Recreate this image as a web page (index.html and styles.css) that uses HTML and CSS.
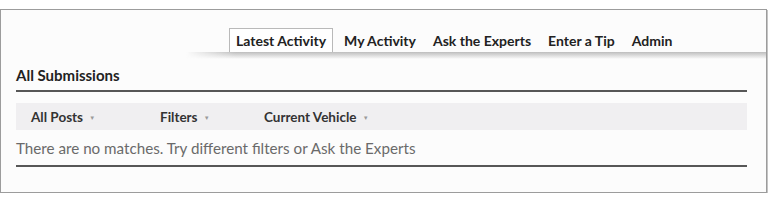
FILE: index.html
```html
<!DOCTYPE html>
<html lang="en">
<head>
    <meta charset="UTF-8">
    <title>All Submissions</title>
    <link rel="stylesheet" href="styles.css">
</head>
<body>
    <div class="frame">
        <ul class="tabs">
            <li class="active">Latest Activity</li>
            <li>My Activity</li>
            <li>Ask the Experts</li>
            <li>Enter a Tip</li>
            <li>Admin</li>
        </ul>
        <div class="tab-shadow"></div>

        <div class="content">
            <h2>All Submissions</h2>

            <div class="filter-bar">
                <span class="filter f-posts">All Posts <i class="caret">&#9660;</i></span>
                <span class="filter f-filters">Filters <i class="caret">&#9660;</i></span>
                <span class="filter">Current Vehicle <i class="caret">&#9660;</i></span>
            </div>

            <p class="empty">There are no matches. Try different filters or Ask the Experts</p>
        </div>
    </div>
</body>
</html>
```

FILE: styles.css
```css
body {
    margin: 0;
    background: #fff;
    font-family: Lato, "Open Sans", sans-serif;
    color: #333;
}
.frame {
    margin-top: 9px;
    width: 765px;
    height: 182px;
    border: 1px solid #9c9c9c;
    box-shadow: 1px 1px 0 #c4c4c4;
    background: #fcfcfc;
}
.tabs {
    display: flex;
    list-style: none;
    margin: 0;
    padding: 18px 0 0 228px;
    height: 24px;
}
.tabs li {
    padding: 0 6px;
    margin-right: 3px;
    border: 1px solid transparent;
    border-bottom: none;
    line-height: 23px;
    font-size: 14px;
    font-weight: bold;
    color: #222;
}
.tabs li.active {
    background: #fff;
    border-color: #b9b9b9;
    margin-right: 4px;
}
.tab-shadow {
    height: 7px;
    margin-left: 185px;
    background: linear-gradient(to bottom, #bdbdbd, rgba(255,255,255,0));
    -webkit-mask-image: linear-gradient(to right, transparent, #000 50px);
    mask-image: linear-gradient(to right, transparent, #000 50px);
}
.content {
    padding: 0 19px 0 15px;
}
h2 {
    margin: 6px 0 0;
    padding-bottom: 5px;
    line-height: 20px;
    font-size: 15px;
    font-weight: bold;
    color: #222;
    border-bottom: 2px solid #575757;
}
.filter-bar {
    display: flex;
    align-items: center;
    margin-top: 11px;
    height: 27px;
    padding-left: 15px;
    background: #f0eff1;
}
.filter {
    font-size: 13.5px;
    font-weight: bold;
    color: #333;
}
.f-posts {
    width: 129px;
}
.f-filters {
    width: 104px;
}
.caret {
    font-style: normal;
    font-size: 6px;
    color: #9a9a9a;
    vertical-align: 2px;
    margin-left: 3px;
}
.empty {
    margin: 8px 0 0;
    padding-bottom: 7px;
    line-height: 20px;
    font-size: 15.2px;
    color: #6a6a6a;
    border-bottom: 2px solid #575757;
}
```
